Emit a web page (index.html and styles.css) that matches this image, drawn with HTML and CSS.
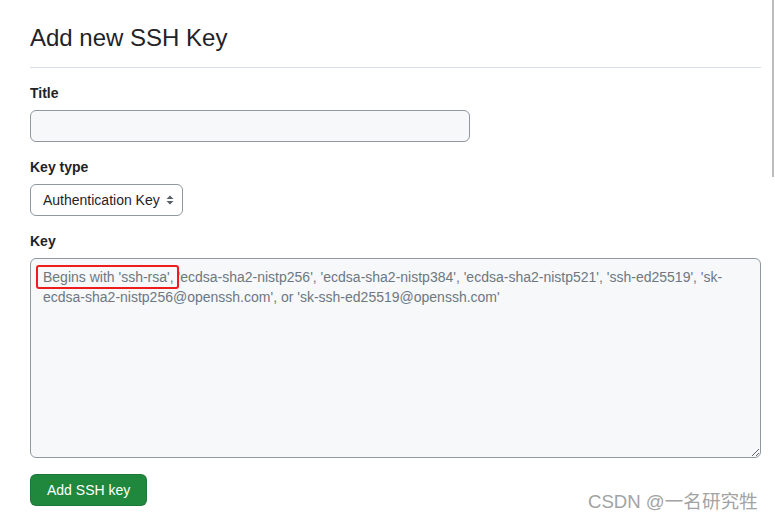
FILE: index.html
```html
<!DOCTYPE html>
<html lang="en">
<head>
<meta charset="utf-8">
<title>Add new SSH Key</title>
<link rel="stylesheet" href="styles.css">
</head>
<body>
<div class="page">
  <h2 class="heading">Add new SSH Key</h2>
  <form class="form">
    <div class="group">
      <label class="label" for="title">Title</label>
      <input class="input" id="title" type="text">
    </div>
    <div class="group">
      <label class="label">Key type</label>
      <div class="select">
        <span>Authentication Key</span>
        <svg class="caret" width="8" height="12" viewBox="0 0 8 12"><path d="M4 1.5 7.5 5h-7z M4 10.5 7.5 7h-7z" fill="#57606a"/></svg>
      </div>
    </div>
    <div class="group key-group">
      <label class="label" for="key">Key</label>
      <textarea class="textarea" id="key" placeholder="Begins with 'ssh-rsa', 'ecdsa-sha2-nistp256', 'ecdsa-sha2-nistp384', 'ecdsa-sha2-nistp521', 'ssh-ed25519', 'sk-ecdsa-sha2-nistp256@openssh.com', or 'sk-ssh-ed25519@openssh.com'"></textarea>
      <span class="highlight"></span>
    </div>
    <button class="btn" type="button">Add SSH key</button>
  </form>
</div>
<div class="watermark">CSDN @一名研究牲</div>
<div class="scrollbar"></div>
</body>
</html>
```

FILE: styles.css
```css
html, body {
  margin: 0;
  padding: 0;
  background: #ffffff;
}
body {
  font-family: "Liberation Sans", Arial, "Noto Sans CJK SC", sans-serif;
  font-size: 14px;
  color: #1f2328;
  width: 775px;
  height: 521px;
  overflow: hidden;
  position: relative;
}
.page {
  width: 731px;
  padding: 20px 0 0 30px;
}
.heading {
  margin: 0;
  font-size: 24px;
  font-weight: 400;
  line-height: 36px;
  padding-bottom: 11px;
  border-bottom: 1px solid #d8dee4;
}
.form {
  display: flex;
  flex-direction: column;
  align-items: flex-start;
}
.group {
  display: flex;
  flex-direction: column;
  align-items: flex-start;
  margin-top: 15px;
}
.label {
  font-weight: 700;
  line-height: 20px;
  margin-bottom: 7px;
}
.input {
  box-sizing: border-box;
  width: 440px;
  height: 32px;
  margin: 0;
  border: 1px solid #8f979f;
  border-radius: 6px;
  background: #f6f8fa;
  font: inherit;
  padding: 5px 12px;
}
.select {
  box-sizing: border-box;
  height: 32px;
  width: 153px;
  display: flex;
  align-items: center;
  justify-content: space-between;
  padding: 0 8px 0 12px;
  border: 1px solid #8f979f;
  border-radius: 6px;
  background: #ffffff;
  line-height: 20px;
}
.caret {
  display: block;
}
.key-group {
  position: relative;
  width: 731px;
}
.textarea {
  box-sizing: border-box;
  width: 731px;
  height: 200px;
  margin: 0;
  padding: 8px 12px;
  border: 1px solid #8f979f;
  border-radius: 6px;
  background: #f6f8fa;
  font: inherit;
  line-height: 20px;
  color: #1f2328;
}
.textarea::placeholder {
  color: #6e7781;
  opacity: 1;
}
.highlight {
  position: absolute;
  left: 6px;
  top: 34px;
  width: 139px;
  height: 20px;
  border: 2px solid #ee1c1c;
  border-radius: 3px;
  pointer-events: none;
}
.btn {
  margin-top: 16px;
  box-sizing: border-box;
  height: 32px;
  padding: 0 16px;
  white-space: nowrap;
  border: 1px solid rgba(31, 35, 40, 0.15);
  border-radius: 6px;
  background: #1f883d;
  color: #ffffff;
  font: inherit;
  line-height: 20px;
}
.watermark {
  position: absolute;
  left: 588px;
  top: 489px;
  font-size: 18.6px;
  line-height: 26px;
  color: #a3a3a3;
  white-space: nowrap;
}
.scrollbar {
  position: absolute;
  right: 1px;
  top: 0;
  width: 2px;
  height: 177px;
  background: #bdbdbd;
}
```
